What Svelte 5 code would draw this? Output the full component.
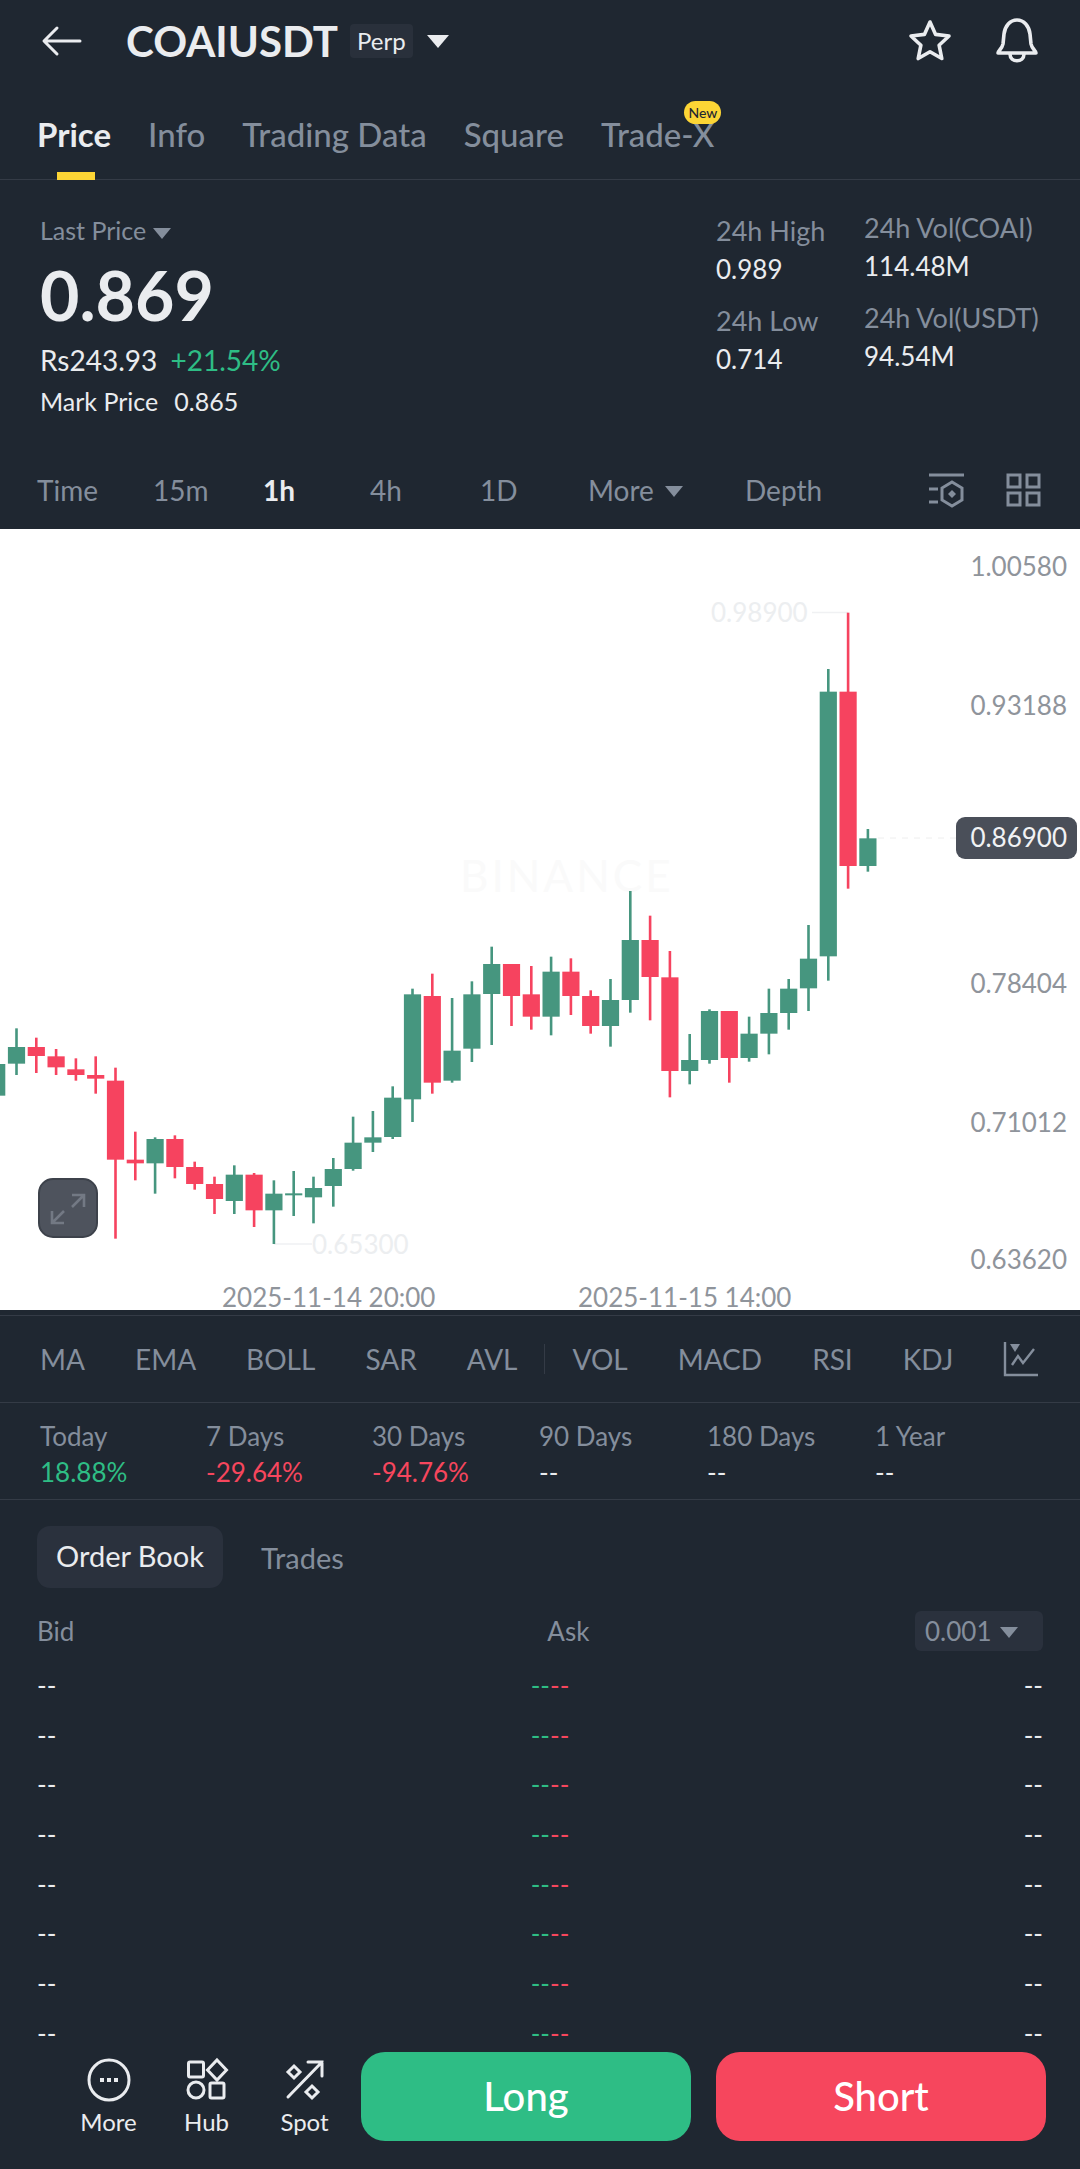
<script>
	const G = '#46967f';
	const R = '#f6435f';
	// wick top, wick bottom, body top, body bottom (px below y=950 times 3), colour
	const raw = [
		[320, 437, 342, 437, G], [235, 375, 291, 341, G], [263, 369, 291, 318, R], [297, 375, 319, 352, R],
		[325, 392, 358, 375, R], [319, 431, 375, 386, R], [353, 866, 392, 629, R], [545, 691, 629, 640, R],
		[562, 731, 567, 640, G], [556, 685, 567, 651, R], [635, 719, 651, 702, R], [680, 792, 702, 747, R],
		[646, 792, 674, 753, G], [669, 831, 674, 781, R], [691, 882, 731, 781, G], [663, 798, 730, 736, G],
		[680, 820, 714, 742, G], [624, 770, 657, 708, G], [500, 662, 578, 657, G], [483, 606, 562, 578, G],
		[409, 567, 443, 561, G], [116, 516, 133, 448, G], [71, 431, 138, 398, R], [144, 398, 302, 392, G],
		[94, 336, 133, 296, G], [-10, 285, 42, 132, G], [42, 228, 42, 138, R], [48, 239, 133, 200, R],
		[20, 256, 65, 200, G], [25, 195, 65, 138, R], [121, 251, 138, 228, R], [87, 290, 150, 228, G],
		[-177, 188, -30, 150, G], [-103, 211, -30, 81, R], [3, 442, 82, 363, R], [252, 403, 330, 363, G],
		[178, 341, 183, 330, G], [183, 398, 183, 324, R], [200, 335, 251, 324, G], [116, 313, 189, 251, G],
		[87, 239, 116, 189, G], [-75, 183, 26, 115, G], [-843, 92, -775, 19, G], [-1012, -184, -775, -252, R],
		[-363, -235, -335, -252, G]
	];
	const candles = raw.map((c, i) => ({
		x: -3.3 + 19.8 * i,
		wt: 950 + c[0] / 3,
		wb: 950 + c[1] / 3,
		bt: 950 + c[2] / 3,
		bb: 950 + c[3] / 3,
		color: c[4]
	}));
	const ticks = [
		['1.00580', 576], ['0.93188', 715], ['0.78404', 993], ['0.71012', 1132], ['0.63620', 1269]
	];
	const tabs = ['Info', 'Trading Data', 'Square'];
	const frames = ['15m', '1h', '4h', '1D'];
	const inds = ['MA', 'EMA', 'BOLL', 'SAR', 'AVL'];
	const inds2 = ['VOL', 'MACD', 'RSI', 'KDJ'];
	const periods = [
		['Today', '18.88%', 'up'], ['7 Days', '-29.64%', 'down'], ['30 Days', '-94.76%', 'down'],
		['90 Days', '--', ''], ['180 Days', '--', ''], ['1 Year', '--', '']
	];
	const rows = Array(8).fill(0);
</script>

<div class="page">
	<header class="top">
		<svg class="back" width="42" height="32" viewBox="0 0 42 32" fill="none" stroke="#eaecef" stroke-width="3" stroke-linecap="round" stroke-linejoin="round"><path d="M39 16H4M16 3 3 16l13 13" /></svg>
		<h1>COAIUSDT</h1>
		<span class="perp">Perp</span>
		<i class="caret big"></i>
		<span class="spacer"></span>
		<svg width="46" height="46" viewBox="0 0 46 46" fill="none" stroke="#eaecef" stroke-width="3.6" stroke-linejoin="round"><path d="M23 4l5.6 12.4 13.4 1.6-9.900 9.200 2.700 13.300L23 33.800 11.200 40.500l2.700-13.300L4 18l13.400-1.600z" /></svg>
		<svg class="bell" width="46" height="48" viewBox="0 0 46 48" fill="none" stroke="#eaecef" stroke-width="3.6" stroke-linejoin="round"><path d="M4 36c0-2 4-4 5-9l1-10C11 9 16 3 23 3s12 6 13 14l1 10c1 5 5 7 5 9z" /><path d="M16 37c0 9 14 9 14 0" /></svg>
	</header>

	<nav class="tabs">
		<span class="tab on">Price</span>
		{#each tabs as t}<span class="tab">{t}</span>{/each}
		<span class="tab new">Trade-X<b>New</b></span>
	</nav>

	<section class="price">
		<div class="left">
			<div class="last">Last Price <i class="caret"></i></div>
			<div class="big-price">0.869</div>
			<div class="fiat">Rs243.93 <span class="up">+21.54%</span></div>
			<div class="mark">Mark Price<span>0.865</span></div>
		</div>
		<div class="stat one">
			<span>24h High</span><strong>0.989</strong>
			<span class="second">24h Low</span><strong>0.714</strong>
		</div>
		<div class="stat two">
			<span>24h Vol(COAI)</span><strong>114.48M</strong>
			<span class="second">24h Vol(USDT)</span><strong>94.54M</strong>
		</div>
	</section>

	<div class="frames">
		<span>Time</span>
		{#each frames as f}<span class:on={f === '1h'}>{f}</span>{/each}
		<span>More <i class="caret"></i></span>
		<span>Depth</span>
		<svg class="sel" width="38" height="36" viewBox="0 0 38 36" fill="none" stroke="#848e9c" stroke-width="3"><path d="M1 3h35M1 17h9M1 30h9" /><path d="M24 10l10 6v12l-10 6-10-6V16z" /><path d="M24 18l4 4-4 4-4-4z" fill="#848e9c" stroke="none" /></svg>
		<svg class="grid-ico" width="36" height="34" viewBox="0 0 36 34" fill="none" stroke="#848e9c" stroke-width="3"><rect x="2" y="2" width="12" height="12" /><rect x="21" y="2" width="12" height="12" /><rect x="2" y="20" width="12" height="12" /><rect x="21" y="20" width="12" height="12" /></svg>
	</div>

	<div class="chart">
		<svg width="1080" height="781" viewBox="0 529 1080 781">
			<text class="mark-text" x="460" y="892">BINANCE</text>
			{#each ticks as t}<text class="tick" x="1067" y={t[1]} text-anchor="end">{t[0]}</text>{/each}
			<text class="tick" x="1067" y="855" text-anchor="end">0.85796</text>

			<path d="M812 612.500H848M274 1244H312" stroke="#f0f1f3" stroke-width="1.500" fill="none" />
			<path d="M878 838H956" stroke="#eeeeee" stroke-width="1" stroke-dasharray="6 6" />
			<text class="ghost" x="711" y="622">0.98900</text>
			<text class="ghost" x="312" y="1254">0.65300</text>

			{#each candles as c}
				<rect x={c.x - 1.300} y={c.wt} width="2.600" height={c.wb - c.wt} fill={c.color} />
				<rect x={c.x - 8.600} y={c.bt} width="17.200" height={c.bb - c.bt} fill={c.color} />
			{/each}

			<rect x="956" y="817" width="121" height="42" rx="9" fill="#4a4f59" />
			<text class="tick light" x="1067" y="847" text-anchor="end">0.86900</text>

			<rect x="39" y="1179" width="58" height="58" rx="14" fill="#4e535d" stroke="#3d424b" stroke-width="2" />
			<path d="M72 1195h12v12M84 1195l-12 12M64 1211l-12 12M52 1211v12h12" fill="none" stroke="#737984" stroke-width="2.600" />

			<text class="tick" x="222" y="1307">2025-11-14 20:00</text>
			<text class="tick" x="578" y="1307">2025-11-15 14:00</text>
		</svg>
	</div>

	<div class="inds">
		{#each inds as t}<span>{t}</span>{/each}
		<i class="sep"></i>
		{#each inds2 as t}<span>{t}</span>{/each}
		<svg width="36" height="36" viewBox="0 0 36 36" fill="none" stroke="#848e9c" stroke-width="2.400"><path d="M2 1v33h33" /><path d="M9 24l6-9 5 7 11-14" /><path d="M7 3h10l-5 8z" fill="#848e9c" stroke="none" /></svg>
	</div>

	<div class="periods">
		{#each periods as p}
			<div><span>{p[0]}</span><strong class={p[2]}>{p[1]}</strong></div>
		{/each}
	</div>

	<div class="book-tabs">
		<span class="pill">Order Book</span>
		<span class="trades">Trades</span>
	</div>

	<div class="book-head">
		<span>Bid</span>
		<span class="ask">Ask</span>
		<span class="step">0.001 <i class="caret"></i></span>
	</div>

	<div class="book">
		{#each rows as _}
			<div class="row">
				<span>--</span>
				<span class="up mid">--</span>
				<span class="down">--</span>
				<span class="end">--</span>
			</div>
		{/each}
	</div>

	<footer class="bottom">
		<div class="nav">
			<svg width="46" height="46" viewBox="0 0 46 46" fill="none" stroke="#eaecef" stroke-width="3"><circle cx="23" cy="23" r="20" /><path d="M14 21h4v4h-4zM21 21h4v4h-4zM28 21h4v4h-4z" fill="#eaecef" stroke="none" /></svg>
			<span>More</span>
		</div>
		<div class="nav">
			<svg width="46" height="46" viewBox="0 0 46 46" fill="none" stroke="#eaecef" stroke-width="3"><rect x="4.500" y="5" width="15" height="15" rx="1.500" /><path d="M33 3l9.500 10L33 23 23.500 13z" /><circle cx="12" cy="33" r="8" /><rect x="26" y="26" width="14" height="15" rx="1.500" /></svg>
			<span>Hub</span>
		</div>
		<div class="nav">
			<svg width="46" height="46" viewBox="0 0 46 46" fill="none" stroke="#eaecef" stroke-width="3" stroke-linecap="round"><path d="M6 40L40 5M26 5h14v14" /><path d="M12 9l6 6-6 6-6-6zM30 29l6 6-6 6-6-6z" /></svg>
			<span>Spot</span>
		</div>
		<button class="long">Long</button>
		<button class="short">Short</button>
	</footer>
</div>

<style>
	:global(body) {
		margin: 0;
		background: #1f2731;
	}

	.page {
		width: 1080px;
		height: 2169px;
		overflow: hidden;
		background: #1f2731;
		color: #eaecef;
		font-family: Lato, 'Liberation Sans', sans-serif;
		display: flex;
		flex-direction: column;
	}

	i.caret {
		display: inline-block;
		border-left: 9px solid transparent;
		border-right: 9px solid transparent;
		border-top: 11px solid #848e9c;
		vertical-align: middle;
	}

	i.caret.big {
		border-left-width: 11px;
		border-right-width: 11px;
		border-top: 13px solid #eaecef;
		margin: 0 0 0 14px;
	}

	.top {
		height: 82px;
		box-sizing: border-box;
		display: flex;
		align-items: center;
		padding-left: 41px;
	}

	.top h1 {
		margin: 0 0 0 43px;
		font-size: 42px;
		font-weight: 700;
		line-height: 1;
	}

	.perp {
		margin-left: 12px;
		padding: 0 7px;
		height: 34px;
		line-height: 34px;
		font-size: 24px;
		background: #29303b;
		border-radius: 4px;
	}

	.spacer {
		flex: 1;
	}

	.bell {
		margin: 0 40px 0 41px;
	}

	.tabs {
		height: 98px;
		box-sizing: border-box;
		border-bottom: 1px solid #343b46;
		display: flex;
		gap: 37px;
		padding: 33px 0 0 37px;
		font-size: 33px;
		color: #848e9c;
		font-weight: 500;
	}

	.tab {
		position: relative;
		line-height: 38px;
	}

	.tab.on {
		color: #eaecef;
		font-weight: 700;
	}

	.tab.on::after {
		content: '';
		position: absolute;
		left: 20px;
		width: 38px;
		top: 57px;
		height: 8px;
		background: #fcd535;
	}

	.new b {
		position: absolute;
		right: -7px;
		top: -14px;
		width: 37px;
		height: 23px;
		border-radius: 12px;
		background: #fcd535;
		color: #1f2731;
		font-size: 14px;
		line-height: 23px;
		text-align: center;
		font-weight: 500;
	}

	.price {
		height: 270px;
		box-sizing: border-box;
		display: flex;
		padding: 35px 0 0 40px;
	}

	.left {
		width: 676px;
	}

	.last {
		font-size: 25px;
		line-height: 30px;
		color: #848e9c;
	}

	.big-price {
		font-size: 68px;
		font-weight: 700;
		line-height: 80px;
		margin-top: 10px;
	}

	.fiat {
		font-size: 28px;
		line-height: 34px;
		margin-top: 8px;
	}

	.fiat .up {
		margin-left: 6px;
	}

	.up {
		color: #2ebd85;
	}

	.down {
		color: #f6465d;
	}

	.mark {
		font-size: 25px;
		line-height: 30px;
		margin-top: 9px;
	}

	.mark span {
		margin-left: 16px;
	}

	.stat {
		display: flex;
		flex-direction: column;
		font-size: 27px;
		line-height: 32px;
	}

	.stat span {
		color: #848e9c;
	}

	.stat strong {
		font-weight: 400;
		font-size: 26px;
		color: #eaecef;
		margin-top: 6px;
	}

	.stat .second {
		margin-top: 20px;
	}

	.one {
		width: 148px;
	}

	.two {
		margin-top: -3px;
	}

	.frames {
		height: 79px;
		display: grid;
		grid-template-columns: 116px 110px 107px 110px 108px 157px 183px 78px auto;
		align-items: center;
		padding-left: 37px;
		font-size: 28px;
		color: #848e9c;
	}

	.frames .on {
		color: #eaecef;
		font-weight: 700;
	}

	.frames .caret {
		margin: -4px 0 0 4px;
	}

	.chart {
		height: 781px;
		background: #fff;
		font-size: 0;
	}

	.chart svg {
		display: block;
	}

	.tick {
		font-size: 26px;
		fill: #8f949b;
	}

	.tick.light {
		fill: #f1f2f4;
	}

	.ghost {
		font-size: 26px;
		fill: #eceef0;
	}

	.mark-text {
		font-size: 44px;
		fill: #fafafa;
		letter-spacing: 3px;
	}

	.inds {
		height: 88px;
		box-sizing: border-box;
		margin-top: 5px;
		border-top: 1px solid #343b46;
		border-bottom: 1px solid #343b46;
		display: flex;
		align-items: center;
		padding-left: 40px;
		gap: 50px;
		font-size: 28px;
		color: #848e9c;
	}

	.inds .sep {
		width: 1px;
		height: 30px;
		background: #343b46;
		margin: 0 -23px;
	}

	.periods {
		height: 97px;
		box-sizing: border-box;
		border-bottom: 1px solid #343b46;
		display: grid;
		grid-template-columns: 166px 166px 167px 168px 168px auto;
		padding: 15px 0 0 40px;
	}

	.periods div {
		display: flex;
		flex-direction: column;
		font-size: 26px;
		color: #848e9c;
		line-height: 36px;
	}

	.periods strong {
		font-weight: 400;
		color: #eaecef;
	}

	.periods strong.up {
		color: #2ebd85;
	}

	.periods strong.down {
		color: #f6465d;
	}

	.book-tabs {
		height: 62px;
		margin-top: 26px;
		display: flex;
		align-items: center;
		padding-left: 37px;
		font-size: 29px;
	}

	.pill {
		background: #2a313d;
		height: 62px;
		line-height: 60px;
		padding: 0 19px;
		border-radius: 13px;
	}

	.trades {
		margin-left: 38px;
		color: #848e9c;
	}

	.book-head {
		height: 42px;
		margin-top: 22px;
		display: flex;
		align-items: center;
		padding: 0 37px;
		font-size: 26px;
		color: #848e9c;
	}

	.ask {
		margin-left: 473px;
		flex: 1;
	}

	.step {
		background: #2a313d;
		border-radius: 6px;
		width: 128px;
		box-sizing: border-box;
		height: 40px;
		line-height: 40px;
		padding-left: 10px;
	}

	.step .caret {
		margin: -4px 0 0 2px;
	}

	.book {
		margin-top: 8px;
	}

	.row {
		height: 49.700px;
		display: grid;
		grid-template-columns: 469px 44px auto 1fr;
		align-items: center;
		padding: 0 37px;
		font-size: 26px;
	}

	.row .mid {
		text-align: right;
	}

	.row .down {
		margin-left: 0;
	}

	.row .end {
		text-align: right;
	}

	.bottom {
		height: 115px;
		display: flex;
		align-items: flex-start;
		padding-left: 60px;
		margin-top: -6px;
	}

	.nav {
		width: 99px;
		margin-left: -1px;
		display: flex;
		flex-direction: column;
		align-items: center;
		font-size: 24px;
		line-height: 32px;
	}

	.nav svg {
		margin-top: 5px;
		margin-bottom: 3px;
	}

	.bottom button {
		border: 0;
		height: 89px;
		width: 330px;
		border-radius: 24px;
		color: #fff;
		font: 500 40px Lato, sans-serif;
	}

	.long {
		background: #2ebd85;
		margin-left: 7px;
	}

	.short {
		background: #f6465d;
		margin-left: 25px;
	}
</style>
